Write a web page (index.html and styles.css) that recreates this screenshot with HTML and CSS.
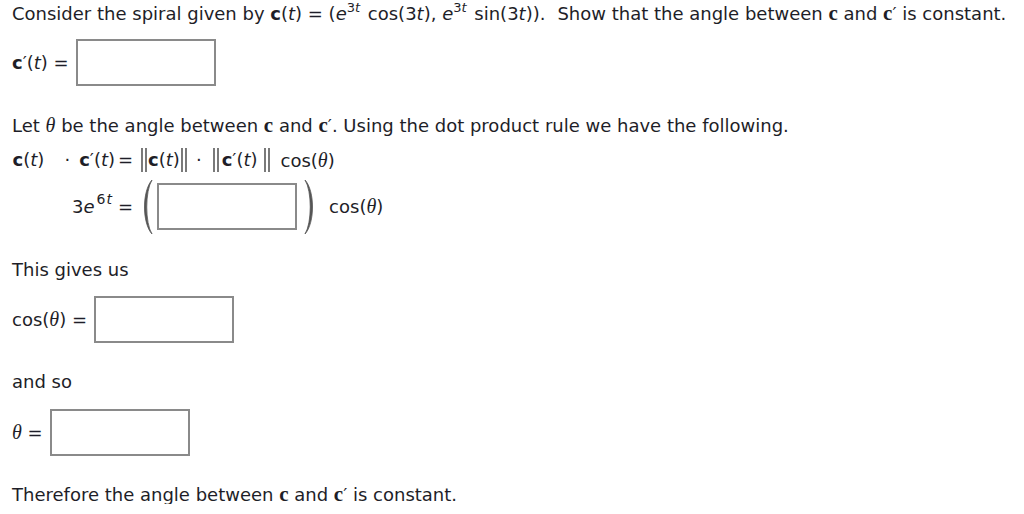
FILE: index.html
```html
<!DOCTYPE html>
<html>
<head>
<meta charset="utf-8">
<link rel="stylesheet" href="styles.css">
</head>
<body>
<div class="page">
  <p class="line l1">Consider the spiral given by <b>c</b>(<i>t</i>) = (<i>e</i><sup>3<i>t</i></sup> cos(3<i>t</i>), <i>e</i><sup>3<i>t</i></sup> sin(3<i>t</i>)).<span class="gap"></span>Show that the angle between <span class="mb">c</span> and <span class="mb">c</span>′ is constant.</p>

  <div class="row r1">
    <span class="lab"><b>c</b>′(<i>t</i>) =</span>
    <span class="box"></span>
  </div>

  <p class="line l2">Let <span class="th">θ</span> be the angle between <span class="mb">c</span> and <span class="mb">c</span>′. Using the dot product rule we have the following.</p>

  <div class="eq">
    <div class="lhs e1"><b>c</b>(<i>t</i>)<span class="dot">·</span><b>c</b>′(<i>t</i>)</div>
    <div class="eqs e1">=</div>
    <div class="rhs e1">
      <span class="norm"><svg width="6" height="24" viewBox="0 0 6 24"><path d="M1 0V24M5 0V24" stroke="#222" stroke-width="1.2"/></svg></span><b>c</b>(<i>t</i>)<span class="norm"><svg width="6" height="24" viewBox="0 0 6 24"><path d="M1 0V24M5 0V24" stroke="#222" stroke-width="1.2"/></svg></span>
      <span class="dot d2">·</span>
      <span class="norm n-open"><svg width="6" height="24" viewBox="0 0 6 24"><path d="M1 0V24M5 0V24" stroke="#222" stroke-width="1.2"/></svg></span><b>c</b>′(<i>t</i>)<span class="norm n-close"><svg width="6" height="24" viewBox="0 0 6 24"><path d="M1 0V24M5 0V24" stroke="#222" stroke-width="1.2"/></svg></span>
      <span class="cos1">cos(<span class="th">θ</span>)</span>
    </div>
    <div class="lhs e2"><span>3<i>e</i><sup class="sup2">6<i>t</i></sup></span></div>
    <div class="eqs e2">=</div>
    <div class="rhs e2">
      <svg class="paren" width="14" height="56" viewBox="0 0 14 56"><path d="M12 1 C2 12 2 44 12 55 C5 44 5 12 12 1Z" fill="#555" stroke="#555" stroke-width="0.8"/></svg>
      <span class="box bx2"></span>
      <svg class="paren pr" width="14" height="56" viewBox="0 0 14 56"><path d="M2 1 C12 12 12 44 2 55 C9 44 9 12 2 1Z" fill="#555" stroke="#555" stroke-width="0.8"/></svg>
      <span class="cos2">cos(<span class="th">θ</span>)</span>
    </div>
  </div>

  <p class="line l3">This gives us</p>

  <div class="row r2">
    <span class="lab">cos(<span class="th">θ</span>) =</span>
    <span class="box"></span>
  </div>

  <p class="line l4">and so</p>

  <div class="row r3">
    <span class="lab"><span class="th">θ</span> =</span>
    <span class="box"></span>
  </div>

  <p class="line l5">Therefore the angle between <span class="mb">c</span> and <span class="mb">c</span>′ is constant.</p>
</div>
</body>
</html>
```

FILE: styles.css
```css
html, body {
  margin: 0;
  padding: 0;
  background: #ffffff;
}
.page {
  padding: 3px 0 0 12px;
  font-family: "DejaVu Sans", Verdana, sans-serif;
  font-size: 18px;
  color: #1e1e28;
}
.line {
  margin: 0;
  height: 20px;
  line-height: 20px;
  white-space: nowrap;
}
.gap {
  display: inline-block;
  width: 12px;
}
b {
  font-weight: bold;
}
i {
  font-style: italic;
}
sup {
  font-size: 13px;
  line-height: 0;
  vertical-align: 8px;
  margin-right: 2px;
}
.sup2 {
  font-size: 14px;
  vertical-align: 9px;
  margin: 0 0 0 2px;
  letter-spacing: 1px;
}
.mb {
  font-family: "Liberation Serif", "Times New Roman", serif;
  font-weight: bold;
  font-size: 21px;
}
.th {
  font-family: "Liberation Serif", "Times New Roman", serif;
  font-style: italic;
  font-size: 20px;
}
.row {
  display: flex;
  align-items: center;
  gap: 7px;
}
.box {
  display: inline-block;
  width: 136px;
  height: 43px;
  border: 2px solid #8a8a8a;
  background: #fff;
}
.r1 { margin-top: 16px; }
.l2 { margin-top: 29px; }
.eq {
  margin-top: 15px;
  display: grid;
  grid-template-columns: 103px auto 1fr;
  column-gap: 0;
  align-items: center;
}
.e1 { height: 20px; line-height: 20px; }
.lhs { text-align: right; white-space: nowrap; }
.rhs { display: flex; align-items: center; white-space: nowrap; }
.dot { padding: 0 9px 0 20px; }
.d2 { padding: 0 8px; }
.norm { display: inline-flex; align-items: center; margin: 0 1px; height: 20px; }
.n-open { margin-left: 3px; margin-right: 3px; }
.n-close { margin-left: 6px; }
.cos1 { margin-left: 10px; }
.eqs { padding: 0 7px 0 3px; }
.e2 { margin-top: 13px; height: 47px; display: flex; align-items: center; }
.lhs.e2 { justify-content: flex-end; padding-right: 2px; }
.paren { margin-right: 3px; }
.pr { margin-left: 6px; margin-right: 0; }
.cos2 { margin-left: 12px; }
.l3 { margin-top: 30px; }
.r2 { margin-top: 16px; }
.l4 { margin-top: 29px; }
.r3 { margin-top: 17px; }
.l5 { margin-top: 28px; }
```
